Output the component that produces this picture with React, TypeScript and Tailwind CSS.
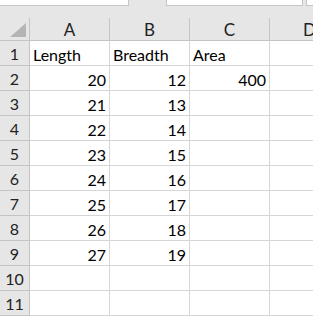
import React from "react";

const cols = ["A", "B", "C", "D"];
const data: (string | number | null)[][] = [
  ["Length", "Breadth", "Area", null],
  [20, 12, 400, null],
  [21, 13, null, null],
  [22, 14, null, null],
  [23, 15, null, null],
  [24, 16, null, null],
  [25, 17, null, null],
  [26, 18, null, null],
  [27, 19, null, null],
  [null, null, null, null],
  [null, null, null, null],
];

export default function App() {
  return (
    <div
      className="w-[313px] h-[318px] overflow-hidden bg-white text-black"
      style={{ fontFamily: "Lato, 'Open Sans', sans-serif" }}
    >
      <div className="h-[18px] bg-[#e6e6e6] flex items-start">
        <div className="w-[129px] h-[6px] bg-white border-r border-b border-[#c6c6c6]" />
        <div className="ml-[37px] w-[137px] h-[6px] bg-white border-l border-r border-b border-[#c6c6c6]" />
        <div className="ml-[3px] flex-1 h-[6px] bg-white border-l border-b border-[#c6c6c6]" />
      </div>
      <div className="grid grid-cols-[30px_80px_80px_80px_80px] grid-rows-[23px_repeat(11,25px)]">
        <div className="bg-[#e6e6e6] border-r border-b border-[#c4c4c4] relative">
          <div className="absolute right-[3px] bottom-[3px] w-0 h-0 border-l-[16px] border-l-transparent border-b-[14px] border-b-[#b4b4b4]" />
        </div>
        {cols.map((c) => (
          <div
            key={c}
            className="bg-[#e6e6e6] border-r border-b border-[#c4c4c4] flex items-end justify-center text-[17px] leading-[20px] text-[#222]"
          >
            {c}
          </div>
        ))}
        {data.map((row, r) => (
          <React.Fragment key={r}>
            <div className="bg-[#e6e6e6] border-r border-b border-[#c4c4c4] flex items-center justify-center pt-[1px] text-[16px] text-[#222]">
              {r + 1}
            </div>
            {row.map((v, ci) => (
              <div
                key={ci}
                className={
                  "border-r border-b border-[#d6d6d6] flex items-end pb-[1px] px-[3px] text-[16px] leading-[19px] " +
                  (typeof v === "number" ? "justify-end" : "justify-start")
                }
              >
                {v ?? ""}
              </div>
            ))}
          </React.Fragment>
        ))}
      </div>
    </div>
  );
}
